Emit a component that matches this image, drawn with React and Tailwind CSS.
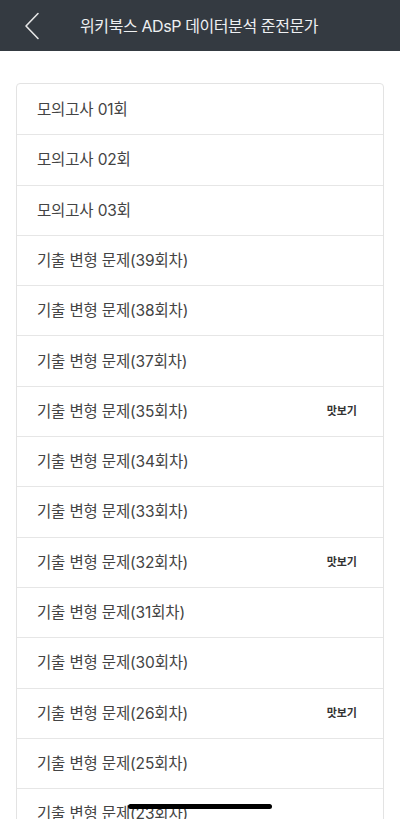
const items = [
  { title: '모의고사 01회' },
  { title: '모의고사 02회' },
  { title: '모의고사 03회' },
  { title: '기출 변형 문제(39회차)' },
  { title: '기출 변형 문제(38회차)' },
  { title: '기출 변형 문제(37회차)' },
  { title: '기출 변형 문제(35회차)', preview: true },
  { title: '기출 변형 문제(34회차)' },
  { title: '기출 변형 문제(33회차)' },
  { title: '기출 변형 문제(32회차)', preview: true },
  { title: '기출 변형 문제(31회차)' },
  { title: '기출 변형 문제(30회차)' },
  { title: '기출 변형 문제(26회차)', preview: true },
  { title: '기출 변형 문제(25회차)' },
  { title: '기출 변형 문제(23회차)' },
  { title: '기출 변형 문제(22회차)' },
];

const App = () => {
  return (
    <div
      className="relative w-[400px] h-[819px] overflow-hidden bg-white"
      style={{ fontFamily: 'Inter, "Noto Sans CJK KR", sans-serif' }}
    >
      {/* Header */}
      <div className="h-[51px] bg-[#343a41] flex items-center">
        <div className="w-[80px] pl-[24px] flex items-center">
          <svg width="16" height="28" viewBox="0 0 16 28" fill="none">
            <path d="M14 1.5 L2 14 L14 26.5" stroke="#e6e6e6" strokeWidth="1.6" strokeLinecap="round" strokeLinejoin="round" />
          </svg>
        </div>
        <h1 className="text-[16px] text-[#eef0f2] tracking-tight">
          위키북스 ADsP 데이터분석 준전문가
        </h1>
      </div>

      {/* List */}
      <div className="mt-[32px] mx-[16px] border border-[#e3e3e3] rounded-t-[4px]">
        {items.map((item, i) => (
          <div
            key={i}
            className={`h-[50.3px] flex items-center justify-between pl-[20px] pr-[26px] ${
              i > 0 ? 'border-t border-[#e6e6e6]' : ''
            }`}
          >
            <span className="text-[15.5px] text-[#444] tracking-[-0.15px]">{item.title}</span>
            {item.preview && (
              <span className="text-[11px] font-bold text-[#333]">맛보기</span>
            )}
          </div>
        ))}
      </div>

      {/* Home indicator */}
      <div className="absolute left-[128px] bottom-[10px] w-[144px] h-[5px] rounded-full bg-black" />
    </div>
  );
};

export default App;
